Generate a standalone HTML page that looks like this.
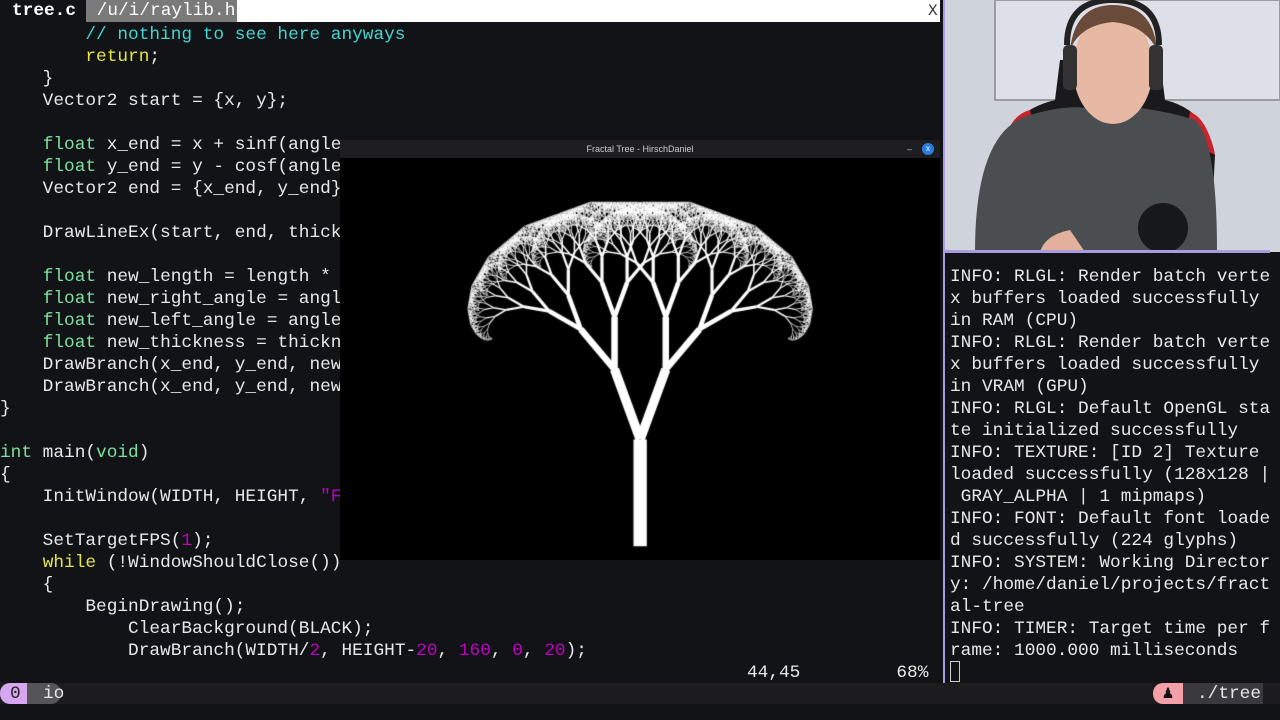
<!DOCTYPE html>
<html><head><meta charset="utf-8">
<style>
html,body{margin:0;padding:0;background:#121317;width:1280px;height:720px;overflow:hidden;position:relative;font-family:"Liberation Mono","DejaVu Sans Mono",monospace;}
.code{position:absolute;left:0;top:24px;font-size:17.8px;line-height:22px;color:#e8e8e8;white-space:pre;}
.c{color:#3fd7d0}.y{color:#e6e640}.g{color:#7ee0a0}.m{color:#c000c0}
.tab{position:absolute;top:0;left:0;height:22px;width:940px;font-size:17.8px;line-height:22px;white-space:pre;}
.win{position:absolute;left:340px;top:140px;width:600px;height:420px;background:#000;}
.tbar{height:18px;background:#1e1e20;color:#ccc;font:9px "Liberation Sans",sans-serif;text-align:center;line-height:18px;position:relative;}
.status{position:absolute;left:0;top:683px;width:1280px;height:21px;background:#1c1c1e;font-size:17.8px;line-height:22px;}
.term{position:absolute;left:950px;top:266px;font-size:17.8px;line-height:22px;color:#e8e8e8;white-space:pre;}
</style></head><body>
<div class="tab"><span style="display:inline-block;width:86px;color:#fff;font-weight:bold;padding-left:12px;box-sizing:border-box">tree.c</span><span style="display:inline-block;width:151px;background:#7a7a7a;color:#fff"> /u/i/raylib.h</span><span style="position:absolute;left:237px;top:0;width:691px;height:22px;background:#fff"></span><span style="position:absolute;left:928px;top:0;width:12px;height:22px;background:#fff;color:#333;font-size:16px">X</span></div>
<div class="code"><span class="c">        // nothing to see here anyways</span>
        <span class="y">return</span>;
    }
    Vector2 start = {x, y};

    <span class="g">float</span> x_end = x + sinf(angle
    <span class="g">float</span> y_end = y - cosf(angle
    Vector2 end = {x_end, y_end}

    DrawLineEx(start, end, thick

    <span class="g">float</span> new_length = length *
    <span class="g">float</span> new_right_angle = angl
    <span class="g">float</span> new_left_angle = angle
    <span class="g">float</span> new_thickness = thickn
    DrawBranch(x_end, y_end, new
    DrawBranch(x_end, y_end, new
}

<span class="g">int</span> main(<span class="g">void</span>)
{
    InitWindow(WIDTH, HEIGHT, <span class="m">"F</span>

    SetTargetFPS(<span class="m">1</span>);
    <span class="y">while</span> (!WindowShouldClose())
    {
        BeginDrawing();
            ClearBackground(BLACK);
            DrawBranch(WIDTH/<span class="m">2</span>, HEIGHT-<span class="m">20</span>, <span class="m">160</span>, <span class="m">0</span>, <span class="m">20</span>);</div>
<div style="position:absolute;left:747px;top:662px;font-size:17.8px;line-height:22px;color:#e8e8e8;white-space:pre">44,45         68%</div>
<div class="win"><div class="tbar">Fractal Tree - HirschDaniel<span style="position:absolute;right:28px;top:0;color:#bbb">–</span><span style="position:absolute;right:6px;top:3px;width:12px;height:12px;border-radius:50%;background:#2a7de0;color:#fff;font-size:8px;line-height:12px">x</span></div><canvas id="cv" width="600" height="402"></canvas></div>
<div style="position:absolute;left:943px;top:0;width:2px;height:683px;background:#a99be0"></div>
<svg style="position:absolute;left:945px;top:0" width="335" height="252">
<rect width="335" height="252" fill="#cfd3dc"/>
<rect x="50" y="0" width="285" height="100" fill="#dde0e8" stroke="#9a9ca0" stroke-width="2"/>
<path d="M60 140 Q70 110 110 100 L115 60 L215 60 L220 100 Q262 110 270 155 L265 252 L60 252Z" fill="#1a1a1c"/>
<path d="M60 140 Q66 115 85 110 L90 135Z M270 155 Q262 118 245 112 L240 140Z" fill="#c8242a"/>
<path d="M30 252 Q30 130 85 115 Q120 105 140 108 L195 108 Q225 112 250 120 Q272 140 272 252Z" fill="#4b4e50"/>
<ellipse cx="168" cy="68" rx="40" ry="56" fill="#e7b9a4"/>
<path d="M125 50 Q130 5 168 5 Q208 5 212 50 Q200 25 168 22 Q135 25 125 50Z" fill="#6a4a38"/>
<rect x="118" y="45" width="14" height="45" rx="5" fill="#333"/><rect x="204" y="45" width="14" height="45" rx="5" fill="#333"/>
<path d="M122 45 Q122 0 168 0 Q214 0 214 45" fill="none" stroke="#222" stroke-width="6"/>
<path d="M95 252 Q100 235 125 230 L140 252Z" fill="#e2b09c"/>
<ellipse cx="218" cy="228" rx="25" ry="25" fill="#16181c"/>
</svg>
<div style="position:absolute;left:945px;top:250px;width:325px;height:3px;background:#a99be0"></div>
<div class="term">INFO: RLGL: Render batch verte
x buffers loaded successfully
in RAM (CPU)
INFO: RLGL: Render batch verte
x buffers loaded successfully
in VRAM (GPU)
INFO: RLGL: Default OpenGL sta
te initialized successfully
INFO: TEXTURE: [ID 2] Texture
loaded successfully (128x128 |
 GRAY_ALPHA | 1 mipmaps)
INFO: FONT: Default font loade
d successfully (224 glyphs)
INFO: SYSTEM: Working Director
y: /home/daniel/projects/fract
al-tree
INFO: TIMER: Target time per f
rame: 1000.000 milliseconds</div>
<div style="position:absolute;left:950px;top:661px;width:10px;height:21px;border:1px solid #ccc;box-sizing:border-box"></div>
<div class="status">
<span style="position:absolute;left:0;top:0;width:27px;height:21px;background:#d7a6f0;color:#222;border-radius:10px 0 0 10px;padding-left:10px;box-sizing:border-box">0</span>
<span style="position:absolute;left:27px;top:0;width:34px;height:21px;background:#555558;color:#e8e8e8;border-radius:0 10px 10px 0;padding-left:16px;box-sizing:border-box">io</span>
<span style="position:absolute;left:1153px;top:0;width:30px;height:21px;background:#f4a0a8;border-radius:10px 0 0 10px;color:#111;text-align:center">♟</span>
<span style="position:absolute;left:1183px;top:0;width:80px;height:21px;background:#3a3a3e;color:#e8e8e8;padding-left:14px;box-sizing:border-box">./tree</span>
</div>
<script>
var c=document.getElementById('cv').getContext('2d');c.fillStyle='#000';c.fillRect(0,0,600,402);
c.strokeStyle='#fff';var s=0.667;
function b(x,y,l,a,t){if(l<1.5)return;var xe=x+Math.sin(a)*l,ye=y-Math.cos(a)*l;
c.lineWidth=Math.max(t*s,0.6);c.beginPath();c.moveTo(x*s,y*s);c.lineTo(xe*s,ye*s);c.stroke();
b(xe,ye,l*0.7,a+0.35,t*0.7);b(xe,ye,l*0.7,a-0.35,t*0.7);}
b(450,582,160,0,20);
</script>
</body></html>
